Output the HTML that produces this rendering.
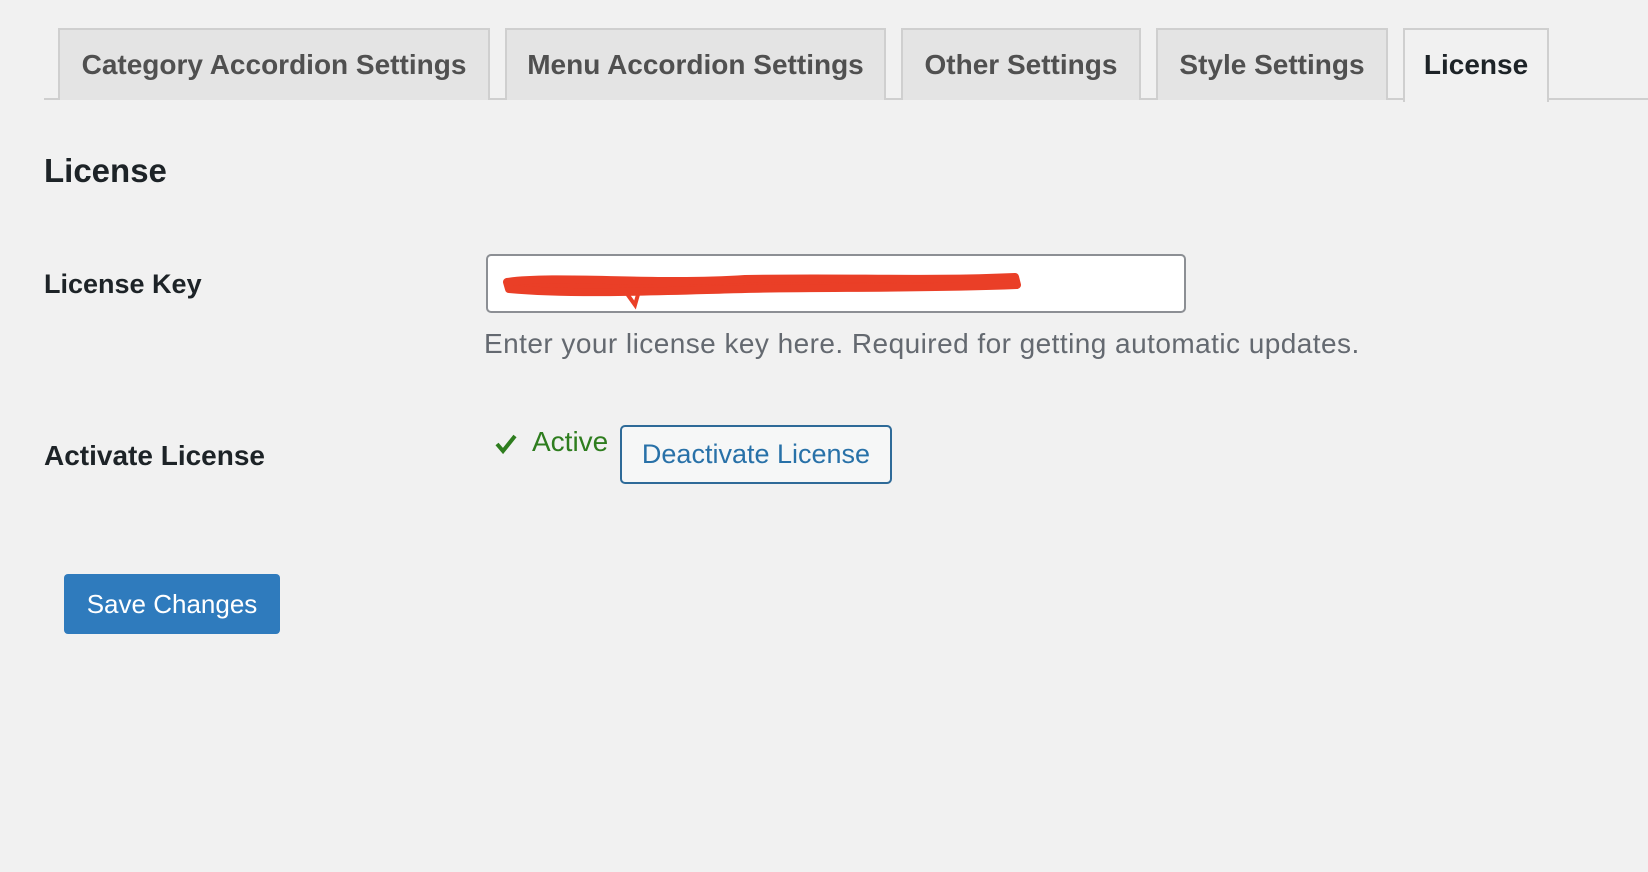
<!DOCTYPE html>
<html><head><meta charset="utf-8"><style>
body{margin:0;width:1648px;height:872px;background:#f1f1f1;font-family:"Liberation Sans",sans-serif;position:relative;overflow:hidden}
.a{position:absolute}
.line{left:44px;top:98px;width:1604px;height:2px;background:#cfcfcf}
.tab{top:28px;border:2px solid #cfcfcf;border-bottom:none;background:#e4e4e4;color:#505050;font-weight:bold;font-size:28px;line-height:70px;text-align:center;box-sizing:border-box;height:72px;white-space:nowrap}
.tab.on{background:#f1f1f1;color:#1d2327;height:74px}
.lbl{font-weight:bold;color:#1d2327;font-size:27px}
</style></head><body>
<div class="a line"></div>
<div class="a tab" style="left:58px;width:432px">Category Accordion Settings</div>
<div class="a tab" style="left:505px;width:381px">Menu Accordion Settings</div>
<div class="a tab" style="left:901px;width:240px">Other Settings</div>
<div class="a tab" style="left:1156px;width:232px">Style Settings</div>
<div class="a tab on" style="left:1403px;width:146px">License</div>
<div class="a" style="left:44px;top:152px;font-size:33px;font-weight:bold;color:#1d2327">License</div>
<div class="a lbl" style="left:44px;top:269px">License Key</div>
<div class="a" style="left:486px;top:254px;width:700px;height:59px;border:2px solid #8c8f94;border-radius:5px;background:#fff;box-sizing:border-box"></div>
<svg class="a" style="left:495px;top:265px" width="540" height="45"><path d="M12 17 C60 10 160 20 250 14 C350 12 430 16 520 12 L522 20 C420 24 330 22 250 24 C170 26 80 30 14 24 Z" fill="#ea3f27" stroke="#ea3f27" stroke-width="8" stroke-linejoin="round"/><path d="M130 26 L140 40 L144 26" fill="none" stroke="#ea3f27" stroke-width="4"/></svg>
<div class="a" style="left:484px;top:328px;font-size:28px;letter-spacing:0.45px;color:#646970;white-space:nowrap">Enter your license key here. Required for getting automatic updates.</div>
<div class="a lbl" style="left:44px;top:440px;font-size:28px">Activate License</div>
<svg class="a" style="left:494px;top:433px" width="24" height="22"><path d="M3 11 L9 18 L21 3" fill="none" stroke="#2e7d1e" stroke-width="4"/></svg>
<div class="a" style="left:532px;top:426px;font-size:28px;color:#2e7d1e">Active</div>
<div class="a" style="left:620px;top:425px;width:272px;height:59px;border:2px solid #2e6a98;border-radius:5px;background:#f6f7f7;box-sizing:border-box;color:#2871a8;font-size:27px;text-align:center;line-height:55px">Deactivate License</div>
<div class="a" style="left:64px;top:574px;width:216px;height:60px;border-radius:4px;background:#2f7bbd;color:#fff;font-size:26px;text-align:center;line-height:60px">Save Changes</div>
</body></html>
